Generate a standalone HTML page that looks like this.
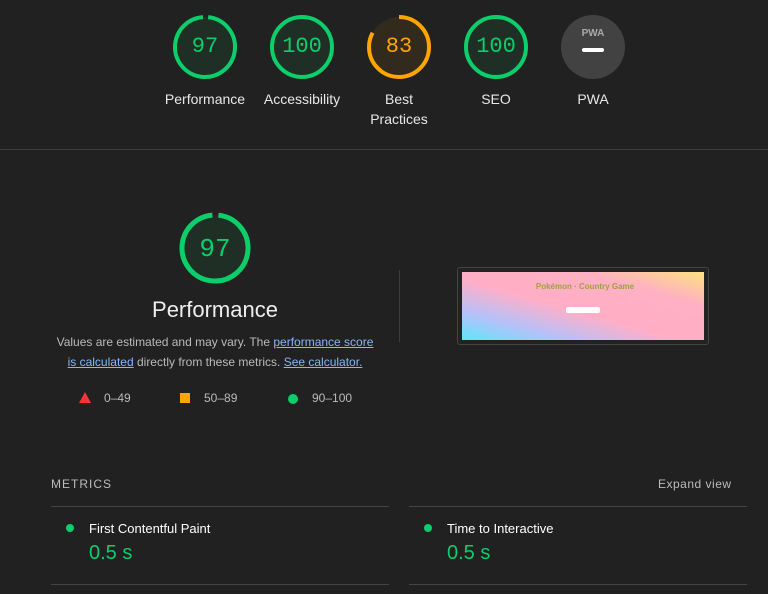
<!DOCTYPE html>
<html><head><style>
body{margin:0;width:768px;height:594px;background:#212121;font-family:"Liberation Sans",sans-serif;color:#fff;position:relative;overflow:hidden}
.a{position:absolute}
.num{position:absolute;font-family:"Liberation Mono",monospace;text-align:center;width:100px}
.lbl{position:absolute;width:100px;text-align:center;font-size:14px;color:#e8e8e8;line-height:20px}
.hr{position:absolute;height:1px;background:#3d3d3d}
.mt{position:absolute;font-size:13px;color:#fff}
.mv{position:absolute;font-size:20px;color:#0cce6b}
.dot{position:absolute;width:8px;height:8px;border-radius:50%;background:#0cce6b}
</style></head><body>
<svg class="a" style="left:0;top:0" width="768" height="150">
 <g fill="none" stroke-width="4">
  <circle cx="205" cy="47" r="30" fill="#1f2f25" stroke="#0cce6b" stroke-dasharray="183 200" transform="rotate(-84 205 47)"/>
  <circle cx="302" cy="47" r="30" fill="#1f2f25" stroke="#0cce6b"/>
  <circle cx="399" cy="47" r="30" fill="#332a1e" stroke="#ffa400" stroke-dasharray="156 200" transform="rotate(-90 399 47)"/>
  <circle cx="496" cy="47" r="30" fill="#1f2f25" stroke="#0cce6b"/>
  <circle cx="593" cy="47" r="32" fill="#424242" stroke="none"/>
 </g>
 <rect x="582" y="48" width="22" height="4" rx="2" fill="#fff"/>
 <text x="593" y="36" text-anchor="middle" font-family="Liberation Sans" font-weight="bold" font-size="10" fill="#aaa">PWA</text>
</svg>
<div class="num" style="left:155px;top:34px;font-size:22px;color:#0cce6b">97</div>
<div class="num" style="left:252px;top:34px;font-size:22px;color:#0cce6b">100</div>
<div class="num" style="left:349px;top:34px;font-size:22px;color:#ffa400">83</div>
<div class="num" style="left:446px;top:34px;font-size:22px;color:#0cce6b">100</div>
<div class="lbl" style="left:155px;top:89px">Performance</div>
<div class="lbl" style="left:252px;top:89px">Accessibility</div>
<div class="lbl" style="left:349px;top:89px">Best<br>Practices</div>
<div class="lbl" style="left:446px;top:89px">SEO</div>
<div class="lbl" style="left:543px;top:89px">PWA</div>
<div class="hr" style="left:0;top:149px;width:768px"></div>

<svg class="a" style="left:170px;top:203px" width="90" height="90">
 <circle cx="45" cy="45" r="33" fill="#1f2f25" stroke="#0cce6b" stroke-width="5" stroke-dasharray="201 220" transform="rotate(-84 45 45)"/>
</svg>
<div class="num" style="left:165px;top:234px;font-size:26px;color:#0cce6b">97</div>
<div class="a" style="left:115px;top:297px;width:200px;text-align:center;font-size:22px;color:#eee">Performance</div>
<div class="a" style="left:55px;top:332px;width:320px;text-align:center;font-size:12px;line-height:20px;color:#bbb">Values are estimated and may vary. The <span style="color:#8ab4f8;text-decoration:underline">performance score</span><br><span style="color:#8ab4f8;text-decoration:underline">is calculated</span> directly from these metrics. <span style="color:#8ab4f8;text-decoration:underline">See calculator.</span></div>
<svg class="a" style="left:79px;top:392px" width="12" height="11"><polygon points="6,0 12,11 0,11" fill="#f33"/></svg>
<div class="a" style="left:104px;top:391px;font-size:12px;color:#bbb">0–49</div>
<div class="a" style="left:180px;top:393px;width:10px;height:10px;background:#ffa400"></div>
<div class="a" style="left:204px;top:391px;font-size:12px;color:#bbb">50–89</div>
<div class="dot" style="left:288px;top:394px;width:10px;height:10px"></div>
<div class="a" style="left:312px;top:391px;font-size:12px;color:#bbb">90–100</div>
<div class="a" style="left:399px;top:270px;width:1px;height:72px;background:#3d3d3d"></div>
<div class="a" style="left:457px;top:267px;width:250px;height:76px;border:1px solid #444;border-radius:3px;background:#222"></div>
<div class="a" style="left:462px;top:272px;width:242px;height:68px;background:linear-gradient(to top right,#5ee6fa 0%,#b8c0f8 22%,#ffaec6 45%,#ffb0c2 75%,#fde27f 100%)"></div>
<div class="a" style="left:520px;top:282px;width:130px;text-align:center;font-size:8px;font-weight:bold;color:#a0a040;white-space:nowrap">Pokémon · Country Game</div>
<div class="a" style="left:566px;top:307px;width:34px;height:6px;background:#fff;border-radius:2px"></div>
<div class="a" style="left:51px;top:477px;font-size:12px;letter-spacing:1px;color:#bbb">METRICS</div>
<div class="a" style="left:658px;top:477px;font-size:12px;letter-spacing:.5px;color:#bbb">Expand view</div>
<div class="hr" style="left:51px;top:506px;width:338px;background:#444"></div>
<div class="hr" style="left:409px;top:506px;width:338px;background:#444"></div>
<div class="dot" style="left:66px;top:524px"></div>
<div class="mt" style="left:89px;top:521px">First Contentful Paint</div>
<div class="mv" style="left:89px;top:542px">0.5 s</div>
<div class="dot" style="left:424px;top:524px"></div>
<div class="mt" style="left:447px;top:521px">Time to Interactive</div>
<div class="mv" style="left:447px;top:542px">0.5 s</div>
<div class="hr" style="left:51px;top:584px;width:338px;background:#444"></div>
<div class="hr" style="left:409px;top:584px;width:338px;background:#444"></div>
</body></html>
